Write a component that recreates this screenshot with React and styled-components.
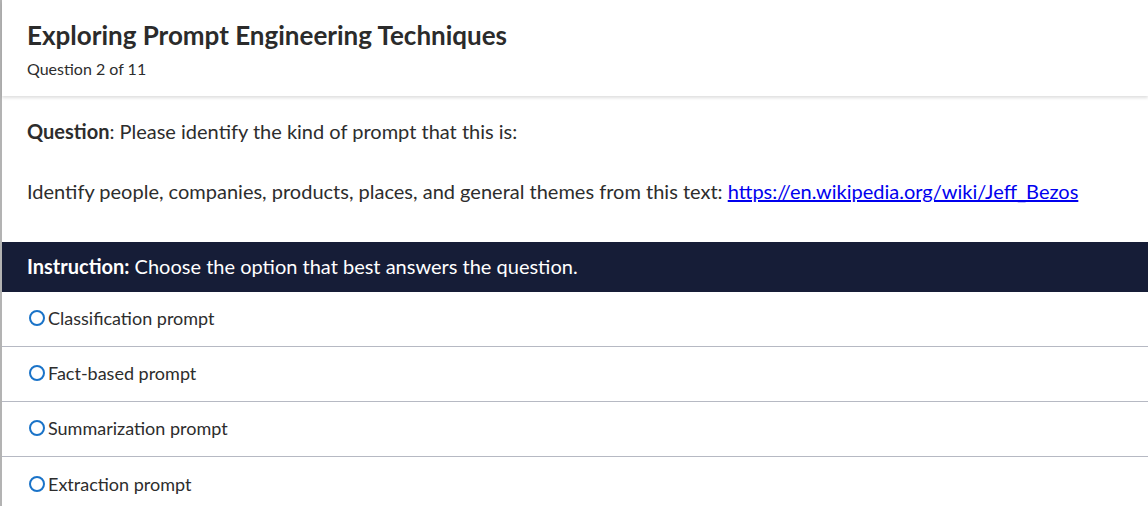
import React from 'react';
import styled, { createGlobalStyle } from 'styled-components';

const GlobalStyle = createGlobalStyle`
  html, body {
    margin: 0;
    padding: 0;
    background: #ffffff;
  }
  body {
    font-family: Lato, "Open Sans", "Liberation Sans", sans-serif;
    color: #2d2d2d;
  }
`;

const Page = styled.div`
  min-height: 506px;
  border-left: 2px solid #b3b3b3;
  box-sizing: border-box;
`;

const Header = styled.header`
  height: 96px;
  box-sizing: border-box;
  padding: 18px 25px 0;
  box-shadow: 0 2px 3px rgba(0, 0, 0, 0.13);
  position: relative;
`;

const Title = styled.h1`
  margin: 0;
  font-size: 26px;
  line-height: 34px;
  font-weight: 700;
  color: #2b2b2b;
`;

const Subtitle = styled.div`
  margin-top: 7px;
  font-size: 16px;
  line-height: 20px;
  color: #2d2d2d;
`;

const QuestionSection = styled.section`
  padding: 21px 25px 37px;
`;

const Para = styled.p`
  margin: 0;
  font-size: 20px;
  line-height: 28px;
  & + & {
    margin-top: 32px;
  }
`;

const Link = styled.a`
  color: #0000ee;
  text-decoration: underline;
`;

const InstructionBar = styled.div`
  height: 50px;
  box-sizing: border-box;
  display: flex;
  align-items: center;
  padding: 0 25px 3px;
  background: #161d37;
  color: #ffffff;
  font-size: 20px;
`;

const OptionList = styled.ul`
  list-style: none;
  margin: 0;
  padding: 0;
`;

const OptionRow = styled.li`
  height: 55px;
  box-sizing: border-box;
  display: flex;
  align-items: center;
  gap: 3px;
  padding: 0 27px 2px;
  border-bottom: 1px solid #b6b9c3;
  font-size: 18px;
  &:last-child {
    border-bottom: none;
  }
`;

const Radio = styled.span`
  width: 16px;
  height: 16px;
  box-sizing: border-box;
  border-radius: 50%;
  border: 2.4px solid #1a73c8;
  flex-shrink: 0;
`;

const options = [
  'Classification prompt',
  'Fact-based prompt',
  'Summarization prompt',
  'Extraction prompt',
];

export default function App() {
  return (
    <Page>
      <GlobalStyle />
      <Header>
        <Title>Exploring Prompt Engineering Techniques</Title>
        <Subtitle>Question 2 of 11</Subtitle>
      </Header>
      <QuestionSection>
        <Para>
          <strong>Question</strong>: Please identify the kind of prompt that this is:
        </Para>
        <Para>
          Identify people, companies, products, places, and general themes from this text:{' '}
          <Link href="#">https://en.wikipedia.org/wiki/Jeff_Bezos</Link>
        </Para>
      </QuestionSection>
      <InstructionBar>
        <strong>Instruction:</strong>&nbsp;Choose the option that best answers the question.
      </InstructionBar>
      <OptionList>
        {options.map(opt => (
          <OptionRow key={opt}>
            <Radio />
            {opt}
          </OptionRow>
        ))}
      </OptionList>
    </Page>
  );
}
